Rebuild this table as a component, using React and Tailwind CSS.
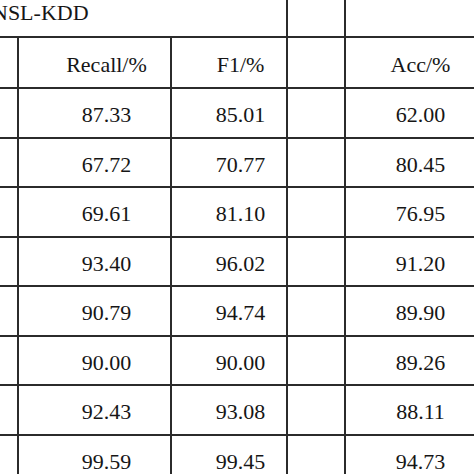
import React from 'react';

const rows = [
  { recall: '87.33', f1: '85.01', acc: '62.00', h: 'h-[50px]' },
  { recall: '67.72', f1: '70.77', acc: '80.45', h: 'h-[49px]' },
  { recall: '69.61', f1: '81.10', acc: '76.95', h: 'h-[50px]' },
  { recall: '93.40', f1: '96.02', acc: '91.20', h: 'h-[49px]' },
  { recall: '90.79', f1: '94.74', acc: '89.90', h: 'h-[50px]' },
  { recall: '90.00', f1: '90.00', acc: '89.26', h: 'h-[49px]' },
  { recall: '92.43', f1: '93.08', acc: '88.11', h: 'h-[50px]' },
  { recall: '99.59', f1: '99.45', acc: '94.73', h: 'h-[50px]' },
];

const line = 'border-[#2b2b2b]';

const Row = ({ h, cells }) => (
  <div className={`flex ${h} border-b-2 ${line}`}>
    <div className={`w-[19px] shrink-0 border-r-2 ${line}`} />
    <div className={`w-[153px] shrink-0 border-r-2 ${line} flex items-center justify-center pl-[24px] pt-1`}>
      {cells[0]}
    </div>
    <div className={`w-[116px] shrink-0 border-r-2 ${line} flex items-center justify-center pl-[23px] pt-1`}>
      {cells[1]}
    </div>
    <div className={`w-[58px] shrink-0 border-r-2 ${line}`} />
    <div className="flex-1 flex items-center justify-center pl-[21px] pt-1">{cells[2]}</div>
  </div>
);

const App = () => {
  return (
    <div className="w-[474px] h-[474px] overflow-hidden bg-white text-[#161616] text-[22px] leading-none font-['Liberation_Serif','Times_New_Roman',serif]">
      <div className={`flex h-[38px] border-b-2 ${line}`}>
        <div className={`w-[288px] shrink-0 border-r-2 ${line} pt-[2px]`}>
          <span className="block ml-[-8px] whitespace-nowrap">NSL-KDD</span>
        </div>
        <div className={`w-[58px] shrink-0 border-r-2 ${line}`} />
        <div className="flex-1" />
      </div>
      <Row h="h-[51px]" cells={['Recall/%', 'F1/%', 'Acc/%']} />
      {rows.map((r, i) => (
        <Row key={i} h={r.h} cells={[r.recall, r.f1, r.acc]} />
      ))}
    </div>
  );
};

export default App;
